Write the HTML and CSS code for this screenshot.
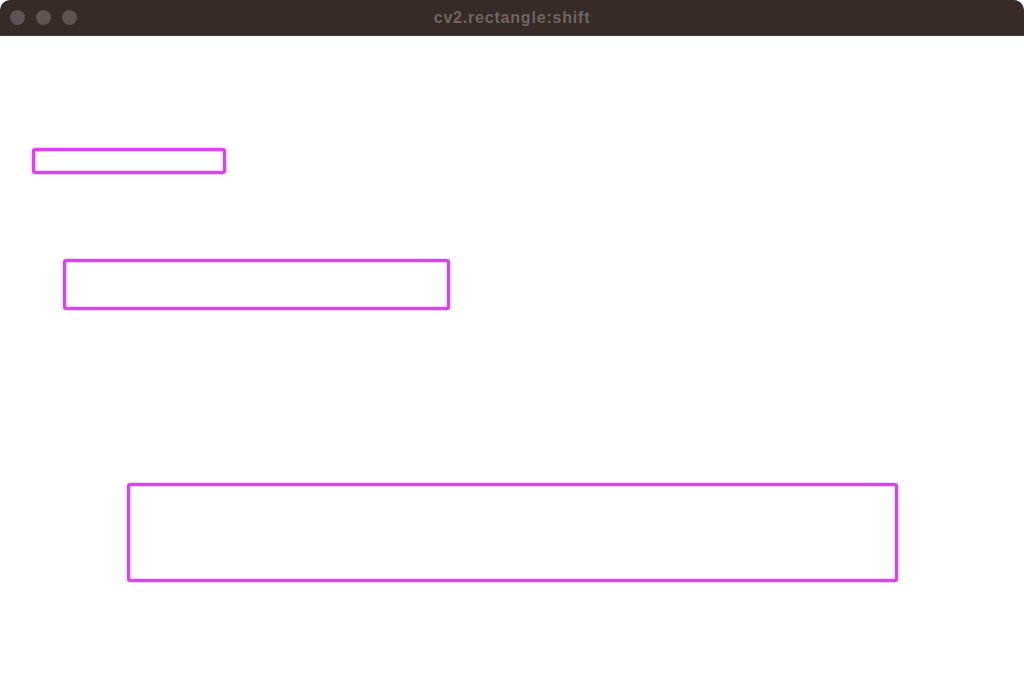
FILE: index.html
```html
<!DOCTYPE html>
<html lang="en">
<head>
    <meta charset="UTF-8">
    <title>cv2.rectangle:shift</title>
    <link rel="stylesheet" href="styles.css">
</head>
<body>

<div class="window">
    <div class="titlebar">
        <div class="lights">
            <span class="light"></span>
            <span class="light"></span>
            <span class="light"></span>
        </div>
        <div class="title">cv2.rectangle:shift</div>
    </div>

    <!-- drawing area: rectangles sit at their own canvas coordinates -->
    <svg class="canvas" width="1024" height="640" viewBox="0 0 1024 640">
        <rect class="box" x="33.5" y="113.5" width="191" height="23" rx="2"></rect>
        <rect class="box" x="64.5" y="224.5" width="384" height="48" rx="2"></rect>
        <rect class="box" x="128.5" y="448.5" width="768" height="96" rx="2"></rect>
    </svg>
</div>

</body>
</html>
```

FILE: styles.css
```css
* {
    box-sizing: border-box;
}

body {
    margin: 0;
    background: #fff;
    font-family: 'Liberation Sans', Arial, sans-serif;
}

.window {
    width: 1024px;
    height: 676px;
    background: #fff;
    overflow: hidden;
}

.titlebar {
    height: 36px;
    background: #372b27;
    border-radius: 10px 10px 0 0;
    border-bottom: 1px solid #4a3f3b;
    display: flex;
    align-items: center;
    position: relative;
}

.lights {
    display: flex;
    gap: 11px;
    padding-left: 10px;
}

.light {
    width: 15px;
    height: 15px;
    border-radius: 50%;
    background: #5f5453;
}

.title {
    position: absolute;
    left: 0;
    right: 0;
    text-align: center;
    color: #6e6462;
    font-size: 16px;
    font-weight: bold;
    letter-spacing: 0.8px;
    pointer-events: none;
}

.canvas {
    display: block;
}

.box {
    fill: none;
    stroke: #e13ff2;
    stroke-width: 3.5;
}
```
